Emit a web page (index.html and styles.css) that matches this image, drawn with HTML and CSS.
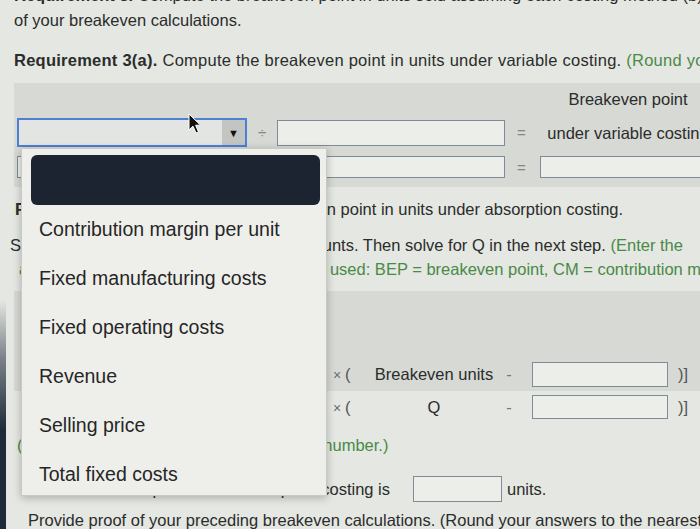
FILE: index.html
```html
<!DOCTYPE html>
<html>
<head>
<meta charset="utf-8">
<link rel="stylesheet" href="styles.css">
</head>
<body>
<div class="page">
  <p class="line first"><b>Requirement 3.</b> Compute the breakeven point in units sold assuming each costing method (b)</p>
  <p class="line l-of">of your breakeven calculations.</p>
  <p class="line l-req"><b>Requirement 3(a).</b> Compute the breakeven point in units under variable costing. <span class="g">(Round your answer to the nearest whole number.)</span></p>

  <div class="panel p1">
    <div class="formula">
      <div class="hdr">Breakeven point</div>
      <div class="select-wrap">
        <div class="select"><span class="arrow">&#9660;</span></div>
        <svg class="cursor" width="14" height="22" viewBox="0 0 14 22"><path d="M1 1 L1 17 L5 13.2 L8 20 L10.5 19 L7.6 12.2 L12.6 12.2 Z" fill="#111" stroke="#fff" stroke-width="1"/></svg>
        <ul class="menu">
          <li class="hl"></li>
          <li>Contribution margin per unit</li>
          <li>Fixed manufacturing costs</li>
          <li>Fixed operating costs</li>
          <li>Revenue</li>
          <li>Selling price</li>
          <li>Total fixed costs</li>
        </ul>
      </div>
      <span class="op">&divide;</span>
      <div class="inp tall"></div>
      <span class="op">=</span>
      <div class="res-lbl">under variable costing</div>
      <div class="inp short"></div>
      <span class="op">&divide;</span>
      <div class="inp short"></div>
      <span class="op">=</span>
      <div class="inp short res"></div>
    </div>
  </div>

  <p class="line l-3b"><b>Requirement 3(b).</b> Compute the breakeven point in units under absorption costing.</p>
  <div class="para">
    <p class="line p-a">Select the formula labels and enter all amounts. Then solve for Q in the next step. <span class="g">(Enter the</span></p>
    <p class="line g p-b">amounts as positive values. Abbreviations used: BEP = breakeven point, CM = contribution margin.)</p>
  </div>

  <div class="panel p2">
    <div class="qrow">
      <span></span>
      <span class="x">&times; <span class="par">(</span></span>
      <span class="qlbl">Breakeven units</span>
      <span class="minus">-</span>
      <div class="inp qin"></div>
      <span class="close">)]</span>
    </div>
  </div>
  <div class="qrow rowb">
    <span></span>
    <span class="x">&times; <span class="par">(</span></span>
    <span class="qlbl">Q</span>
    <span class="minus">-</span>
    <div class="inp qin"></div>
    <span class="close">)]</span>
  </div>

  <p class="line g l-round">(Round your answer to the nearest whole number.)</p>

  <div class="answer">
    <span class="ans-lbl">The breakeven point under absorption costing is</span>
    <div class="inp ans-in"></div>
    <span class="units">units.</span>
  </div>

  <p class="line l-proof">Provide proof of your preceding breakeven calculations. (Round your answers to the nearest whole dollar.)</p>
</div>
</body>
</html>
```

FILE: styles.css
```css
html, body {
  margin: 0;
}
body {
  width: 700px;
  height: 529px;
  overflow: hidden;
  font-family: "Liberation Sans", Arial, sans-serif;
  font-size: 16.5px;
  color: #2b2c2b;
  background:
    linear-gradient(rgba(30, 42, 58, 0) 0, rgba(30, 42, 58, 0.55) 60px, #1e2a3a 130px) left 300px / 6px 229px no-repeat,
    #e4e7e2;
}
.page {
  padding-left: 14px;
}
.line {
  margin: 0;
  white-space: nowrap;
  line-height: 20px;
}
.g {
  color: #4a8a47;
}
.first {
  margin-top: -15px;
}
.l-of {
  margin-top: 5px;
}
.l-req {
  margin-top: 20px;
  letter-spacing: 0.25px;
}

/* panels */
.panel {
  background: #d6d9d4;
}
.p1 {
  margin-top: 13px;
  padding: 6px 0 9px 3px;
}
.formula {
  display: grid;
  grid-template-columns: 230px 30px 228px 33px 180px;
  grid-template-rows: 20px 29px 22px;
  row-gap: 9px;
  align-items: center;
}
.hdr {
  grid-column: 5;
  text-align: center;
  white-space: nowrap;
  line-height: 20px;
}
.select-wrap {
  grid-column: 1;
  grid-row: 2;
  position: relative;
  height: 29px;
}
.select {
  box-sizing: border-box;
  height: 29px;
  border: 2px solid #4e7fd4;
  background: #e2e5e1;
  display: flex;
  justify-content: flex-end;
}
.arrow {
  width: 23px;
  background: #c3c5c3;
  color: #111;
  font-size: 11px;
  display: flex;
  align-items: center;
  justify-content: center;
}
.cursor {
  position: absolute;
  left: 171px;
  top: -5px;
  z-index: 6;
}
.menu {
  position: absolute;
  left: 4px;
  top: 30px;
  width: 306px;
  height: 348px;
  box-sizing: border-box;
  margin: 0;
  padding: 6px 6px 0 9px;
  list-style: none;
  background: #eeefeb;
  border: 1px solid #c8cac6;
  box-shadow: 0 2px 8px rgba(0, 0, 0, 0.25);
  z-index: 5;
}
.menu li {
  height: 49px;
  line-height: 49px;
  padding-left: 8px;
  font-size: 19.5px;
  color: #262626;
  white-space: nowrap;
}
.menu li.hl {
  height: 50px;
  background: #1c2331;
  border-radius: 6px;
}
.op {
  text-align: center;
  color: #858785;
  font-size: 15px;
}
.inp {
  box-sizing: border-box;
  border: 1px solid #7f8b96;
  background: #eceeea;
}
.inp.tall {
  height: 26px;
}
.inp.short {
  height: 22px;
}
.inp.res {
  margin-left: 2px;
  width: 178px;
}
.res-lbl {
  text-align: center;
  white-space: nowrap;
  line-height: 20px;
}

/* part b */
.l-3b {
  margin-top: 12px;
  padding-left: 1px;
}
.para {
  margin-top: 14px;
}
.para .line {
  line-height: 24px;
}
.p-a {
  margin-left: -4px;
}
.p-b {
  padding-left: 5px;
}
.p2 {
  margin-top: 10px;
  padding: 66px 0 0 3px;
}
.qrow {
  display: grid;
  grid-template-columns: 313px 38px 132px 18px 150px 40px;
  height: 34px;
  align-items: center;
}
.rowb {
  margin-top: 2px;
  height: 28px;
  padding-left: 3px;
}
.x {
  color: #6a6c6a;
  font-size: 14px;
  padding-left: 3px;
  white-space: nowrap;
}
.par {
  font-size: 16.5px;
  color: #555;
}
.qlbl {
  text-align: center;
  white-space: nowrap;
}
.minus {
  text-align: center;
  color: #777;
}
.qin {
  justify-self: end;
  width: 136px;
  height: 25px;
}
.rowb .qin {
  height: 24px;
}
.close {
  padding-left: 10px;
  color: #555;
  white-space: nowrap;
}
.l-round {
  margin-top: 14px;
  padding-left: 3px;
}
.answer {
  margin-top: 21px;
  display: grid;
  grid-template-columns: 399px 89px auto;
  height: 26px;
  align-items: center;
}
.ans-lbl {
  justify-self: end;
  white-space: nowrap;
  padding-right: 23px;
}
.ans-in {
  height: 26px;
}
.units {
  padding-left: 5px;
  white-space: nowrap;
}
.l-proof {
  margin-top: 8px;
  padding-left: 14px;
}
```
